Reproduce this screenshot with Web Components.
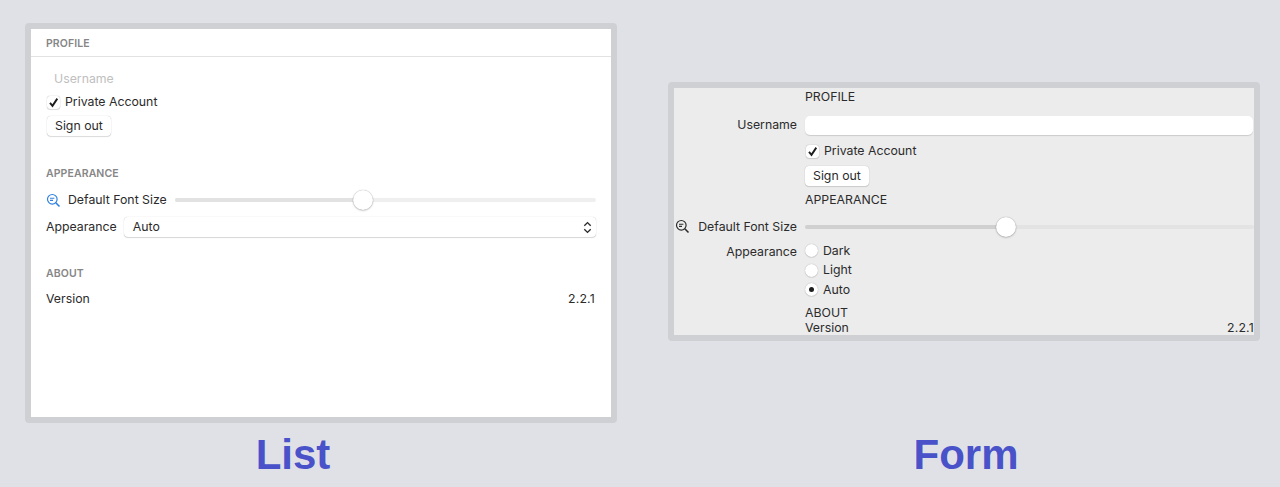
<!DOCTYPE html>
<html lang="en">
<head>
<meta charset="utf-8">
<title>List and Form</title>
<style>
html, body { margin: 0; height: 487px; overflow: hidden; }
body {
  background: #e0e1e6;
  font: 12.3px/16px Inter, "Liberation Sans", sans-serif;
  color: #2b2b2b;
  display: flex;
  gap: 51px;
  padding-left: 25px;
}
</style>
</head>
<body>
<demo-figure top="23" caption="List" shift="-56">
  <list-pane>
    <pane-title>PROFILE</pane-title>
    <div style="padding:13px 15px 0;display:flex;flex-direction:column;align-items:flex-start">
      <span style="color:#c0c0c0;padding-left:8px;height:18px;line-height:18px">Username</span>
      <mac-check style="margin-top:6px">Private Account</mac-check>
      <mac-button style="margin-top:6px;margin-left:1px">Sign out</mac-button>
      <section-head style="margin-top:30px">APPEARANCE</section-head>
      <mac-slider style="margin-top:8px;width:100%" tint="#2f80e0" value="44.65" pale>Default Font Size</mac-slider>
      <div style="display:flex;align-items:center;width:100%;margin-top:7px;gap:7px">
        <span>Appearance</span><mac-select style="flex:1">Auto</mac-select>
      </div>
      <section-head style="margin-top:29px">ABOUT</section-head>
      <div style="display:flex;justify-content:space-between;width:100%;margin-top:9px"><span>Version</span><span style="letter-spacing:.2px;margin-right:1px">2.2.1</span></div>
    </div>
  </list-pane>
</demo-figure>
<demo-figure top="82" caption="Form" shift="4">
  <form-pane>
    <form-row style="padding-top:1px"><span>PROFILE</span></form-row>
    <form-row label="Username" style="margin-top:11px"><mac-field></mac-field></form-row>
    <form-row style="margin-top:8px"><mac-check>Private Account</mac-check></form-row>
    <form-row style="margin-top:4px"><mac-button>Sign out</mac-button></form-row>
    <form-row style="margin-top:6px"><span>APPEARANCE</span></form-row>
    <mac-slider style="margin-top:9px" tint="#2b2b2b" value="44.8" label-width="123">Default Font Size</mac-slider>
    <form-row label="Appearance" style="margin-top:6px">
      <div style="display:flex;flex-direction:column;gap:3.6px">
        <mac-radio>Dark</mac-radio>
        <mac-radio>Light</mac-radio>
        <mac-radio checked>Auto</mac-radio>
      </div>
    </form-row>
    <form-row style="margin-top:7.6px"><span>ABOUT</span></form-row>
    <form-row style="margin-top:-1px"><div style="display:flex;justify-content:space-between"><span>Version</span><span style="letter-spacing:.2px">2.2.1</span></div></form-row>
  </form-pane>
</demo-figure>

<script>
function shadow(el, html) {
  el.attachShadow({ mode: 'open' }).innerHTML = html;
}

class DemoFigure extends HTMLElement {
  connectedCallback() {
    shadow(this, `
      <style>
        :host { display: flex; flex-direction: column; width: 592px; height: 487px; box-sizing: border-box; padding-top: ${this.getAttribute('top')}px; }
        .win { border: 6px solid #cfd0d4; border-radius: 4px; }
        h2 { margin: auto 0 8px; font: bold 42px/48px "Liberation Sans", Arial, sans-serif; color: #4a52c9; text-align: center; position: relative; left: ${this.getAttribute('shift')/2}px; }
      </style>
      <div class="win"><slot></slot></div>
      <h2>${this.getAttribute('caption')}</h2>`);
  }
}

class ListPane extends HTMLElement {
  constructor() {
    super();
    shadow(this, `<style>:host { display: block; height: 388px; background: #fff; overflow: hidden; }</style><slot></slot>`);
  }
}

class FormPane extends HTMLElement {
  constructor() {
    super();
    shadow(this, `<style>:host { display: block; height: 247px; background: #ececec; overflow: hidden; }</style><slot></slot>`);
  }
}

class PaneTitle extends HTMLElement {
  constructor() {
    super();
    shadow(this, `<style>:host { display: block; height: 28px; box-sizing: border-box; padding: 7px 15px 0; border-bottom: 1px solid #e2e2e2; font-size: 10.5px; font-weight: 600; letter-spacing: .1px; color: #868686; }</style><slot></slot>`);
  }
}

class SectionHead extends HTMLElement {
  constructor() {
    super();
    shadow(this, `<style>:host { display: block; font-size: 10.5px; font-weight: 600; letter-spacing: .1px; color: #868686; }</style><slot></slot>`);
  }
}

class FormRow extends HTMLElement {
  connectedCallback() {
    shadow(this, `
      <style>
        :host { display: grid; grid-template-columns: 123px 1fr; column-gap: 8px; align-items: start; }
        .l { text-align: right; line-height: 17px; }
        .c { min-width: 0; }
      </style>
      <div class="l">${this.getAttribute('label') || ''}</div>
      <div class="c"><slot></slot></div>`);
  }
}

class MacCheck extends HTMLElement {
  constructor() {
    super();
    shadow(this, `
      <style>
        :host { display: inline-flex; align-items: center; gap: 5px; height: 16px; }
        .b { width: 13px; height: 13px; box-sizing: border-box; margin-left: 1px; background: #fff; border-radius: 3px; box-shadow: 0 0 1px rgba(0,0,0,.4), 0 1px 1px rgba(0,0,0,.1); display: block; }
      </style>
      <svg class="b" viewBox="0 0 13 13"><path d="M3 6.8l2.5 3L10.3 2.6" fill="none" stroke="#1e1e1e" stroke-width="1.9"/></svg>
      <span><slot></slot></span>`);
  }
}

class MacButton extends HTMLElement {
  constructor() {
    super();
    shadow(this, `
      <style>
        :host { display: inline-block; height: 20px; line-height: 20px; padding: 0 8px; background: #fff; border-radius: 4px; box-shadow: 0 0 1px rgba(0,0,0,.3), 0 1px 1px rgba(0,0,0,.12); }
      </style><slot></slot>`);
  }
}

class MacField extends HTMLElement {
  constructor() {
    super();
    shadow(this, `<style>:host { display: block; height: 19px; background: #fff; border-radius: 5px; margin-right: 1px; box-shadow: 0 1px 1px rgba(0,0,0,.14); }</style>`);
  }
}

class MacSelect extends HTMLElement {
  constructor() {
    super();
    shadow(this, `
      <style>
        :host { display: flex; align-items: center; justify-content: space-between; height: 20px; padding: 0 4px 0 9px; background: #fff; border-radius: 4px; box-shadow: 0 0 1px rgba(0,0,0,.25), 0 1px 1px rgba(0,0,0,.14); }
        svg { display: block; }
      </style>
      <span><slot></slot></span>
      <svg width="9" height="13" viewBox="0 0 9 13"><path d="M1.3 4.7L4.5 1.6l3.2 3.1M1.3 8.3l3.2 3.1 3.2-3.1" fill="none" stroke="#2b2b2b" stroke-width="1.4"/></svg>`);
  }
}

class MacSlider extends HTMLElement {
  connectedCallback() {
    const tint = this.getAttribute('tint');
    const value = this.getAttribute('value');
    const pale = this.hasAttribute('pale');
    const lw = this.getAttribute('label-width');
    shadow(this, `
      <style>
        :host { display: flex; align-items: center; height: 20px; gap: 8px; }
        .lab { display: flex; align-items: center; ${lw ? `width:${lw}px;box-sizing:border-box;padding-left:1px;justify-content:space-between;` : 'gap:7px;'} white-space: nowrap; }
        svg { display: block; flex: none; }
        .track { flex: 1; position: relative; height: 4px; border-radius: 2px; background: ${pale ? '#efefef' : '#e3e3e3'}; }
        .fill { height: 100%; width: ${value}%; border-radius: 2px; background: ${pale ? '#e2e2e2' : '#d0d0d0'}; }
        .thumb { position: absolute; top: -8px; left: ${value}%; margin-left: -10px; width: 20px; height: 20px; border-radius: 50%; background: #fff; box-shadow: 0 0 1px rgba(0,0,0,.4), 0 1px 2px rgba(0,0,0,.18); }
      </style>
      <div class="lab">
        <svg width="15" height="15" viewBox="0 0 15 15" fill="none" stroke="${tint}">
          <circle cx="6.3" cy="6.3" r="4.8" stroke-width="1.2"/>
          <path d="M9.8 9.8l3.7 3.7" stroke-width="1.6"/>
          <path d="M4 5.2h4.4M4 7.4h3" stroke-width="1.1"/>
        </svg>
        <span><slot></slot></span>
      </div>
      <div class="track"><div class="fill"></div><div class="thumb"></div></div>`);
  }
}

class MacRadio extends HTMLElement {
  connectedCallback() {
    shadow(this, `
      <style>
        :host { display: flex; align-items: center; gap: 5px; height: 16px; }
        .r { width: 13px; height: 13px; border-radius: 50%; background: #fff; box-shadow: 0 0 1px rgba(0,0,0,.35), 0 1px 1px rgba(0,0,0,.08); display: flex; align-items: center; justify-content: center; }
        i { width: 5px; height: 5px; border-radius: 50%; background: #1e1e1e; }
      </style>
      <span class="r">${this.hasAttribute('checked') ? '<i></i>' : ''}</span>
      <span><slot></slot></span>`);
  }
}

customElements.define('demo-figure', DemoFigure);
customElements.define('list-pane', ListPane);
customElements.define('form-pane', FormPane);
customElements.define('pane-title', PaneTitle);
customElements.define('section-head', SectionHead);
customElements.define('form-row', FormRow);
customElements.define('mac-check', MacCheck);
customElements.define('mac-button', MacButton);
customElements.define('mac-field', MacField);
customElements.define('mac-select', MacSelect);
customElements.define('mac-slider', MacSlider);
customElements.define('mac-radio', MacRadio);
</script>
</body>
</html>
